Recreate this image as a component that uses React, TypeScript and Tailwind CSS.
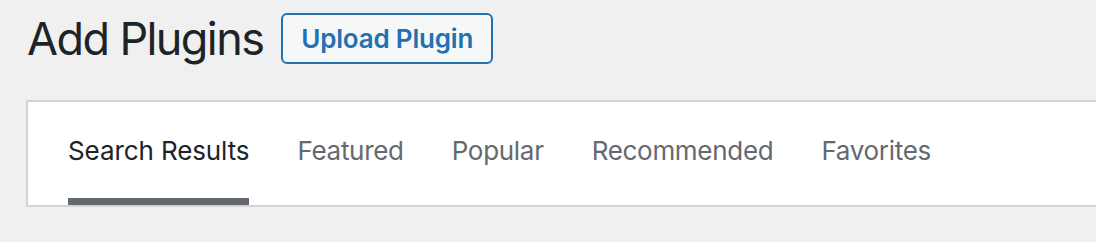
import React from 'react';

const tabs = ['Search Results', 'Featured', 'Popular', 'Recommended', 'Favorites'];

const App = () => {
  return (
    <div
      className="min-h-[242px] w-full overflow-hidden bg-[#f0f0f1] pl-[26px] pt-[13px]"
      style={{ fontFamily: 'Inter, "Noto Sans", sans-serif' }}
    >
      <div className="flex h-[51px] items-center">
        <h1 className="pl-[1px] text-[45px] leading-[51px] font-normal tracking-[-1.6px] text-[#1d2327]">
          Add Plugins
        </h1>
        <button className="ml-[18px] h-[51px] rounded-[6px] border-2 border-[#2271b1] bg-[#f6f7f7] px-[18px] text-[26px] font-semibold tracking-[-0.2px] text-[#2271b1]">
          Upload Plugin
        </button>
      </div>

      <div className="mt-[36px] border-2 border-r-0 border-[#d3d4d6] bg-white">
        <ul className="flex h-[103px] gap-[48px] pl-[40px]">
          {tabs.map((tab, i) => (
            <li
              key={tab}
              className={
                'flex flex-col pt-[34px] text-[26px] leading-[30px] ' +
                (i === 0
                  ? 'border-b-[7px] border-[#646970] tracking-[-0.1px] text-[#1d2327]'
                  : 'border-b-[7px] border-transparent tracking-[-0.3px] text-[#646970]')
              }
            >
              {tab}
            </li>
          ))}
        </ul>
      </div>
    </div>
  );
};

export default App;
